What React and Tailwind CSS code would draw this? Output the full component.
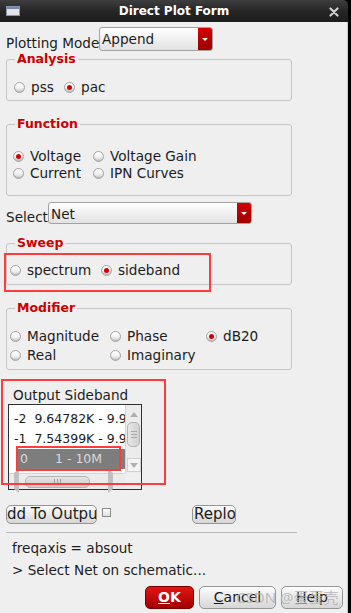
import React from "react";

function Radio({ checked }) {
  return (
    <span className="w-[11px] h-[11px] rounded-full border border-[#a4a4a4] bg-gradient-to-b from-[#ffffff] via-[#f4f4f4] to-[#cfcfcf] flex items-center justify-center shrink-0 shadow-[inset_0_-1px_1px_rgba(0,0,0,0.12)]">
      {checked && <span className="w-[5px] h-[5px] rounded-full bg-[#d40000]" />}
    </span>
  );
}

function RItem({ label, checked, w }) {
  return (
    <div className={"flex items-center gap-[6px] " + (w || "")}>
      <Radio checked={checked} />
      <span className="whitespace-nowrap">{label}</span>
    </div>
  );
}

function Group({ title, className, children }) {
  return (
    <div className={"relative ml-[6px] w-[286px] border border-[#c6c6c6] rounded-[3px] " + className}>
      <span className="absolute left-[8px] top-[-9px] px-[2px] bg-[#efefef] text-[#cc0000] font-bold text-[12.5px] leading-[16px]">
        {title}
      </span>
      {children}
    </div>
  );
}

function Dropdown({ label, className }) {
  return (
    <div className={"relative z-10 flex border border-[#a2a2a2] rounded-[3px] bg-gradient-to-b from-[#ffffff] to-[#e2e2e2] overflow-hidden " + className}>
      <span className="flex-1 pl-[2px] pt-[3px] leading-[16px]">{label}</span>
      <span className="w-[14px] bg-gradient-to-b from-[#d60000] to-[#9c0000] flex items-center justify-center">
        <span className="w-0 h-0 border-l-[3px] border-r-[3px] border-t-[3px] border-l-transparent border-r-transparent border-t-white" />
      </span>
    </div>
  );
}

function Arrow({ dir }) {
  const cls = {
    up: "border-l-[4px] border-r-[4px] border-b-[5px] border-l-transparent border-r-transparent border-b-[#b0b0b0]",
    down: "border-l-[4px] border-r-[4px] border-t-[5px] border-l-transparent border-r-transparent border-t-[#b0b0b0]",
    left: "border-t-[4px] border-b-[4px] border-r-[5px] border-t-transparent border-b-transparent border-r-[#c0c0c0]",
    right: "border-t-[4px] border-b-[4px] border-l-[5px] border-t-transparent border-b-transparent border-l-[#c0c0c0]",
  }[dir];
  return <span className={"w-0 h-0 " + cls} />;
}

function Btn({ children, className }) {
  return (
    <div className={"flex items-center overflow-hidden whitespace-nowrap border border-[#959595] rounded-[5px] bg-gradient-to-b from-[#fdfdfd] to-[#d6d6d6] " + className}>
      {children}
    </div>
  );
}

export default function App() {
  return (
    <div className="relative w-[351px] h-[613px] bg-black overflow-hidden font-['DejaVu_Sans',sans-serif] text-[13.6px] text-[#1c1c1c]">
      <div className="w-[348px] h-[613px] flex flex-col">
        {/* title bar */}
        <div className="h-[22px] rounded-tr-[5px] bg-gradient-to-b from-[#3e3e3e] via-[#262626] to-[#1c1c1c] flex items-center relative">
          <div className="ml-[6px] w-[14px] h-[10px] bg-[#e4e4e8] border border-[#8a96a8] flex flex-col">
            <div className="h-[2px] bg-[#6f86b0]" />
          </div>
          <div className="absolute left-0 right-0 text-center text-white font-bold text-[12px] leading-[22px]">
            Direct Plot Form
          </div>
          <svg className="absolute left-[329px] top-[7px]" width="10" height="10" viewBox="0 0 10 10">
            <path d="M1.5 1.5 L8.5 8.5 M8.5 1.5 L1.5 8.5" stroke="#cfcfcf" strokeWidth="2.2" strokeLinecap="round" />
          </svg>
        </div>

        {/* body */}
        <div className="flex-1 bg-[#efefef] border-r border-[#c4c4c4] flex flex-col">
          {/* plotting mode */}
          <div className="mt-[5px] ml-[6px] flex items-start">
            <div className="w-[93px] pt-[8px] leading-[16px] whitespace-nowrap">Plotting Mode</div>
            <Dropdown label="Append" className="w-[114px] h-[24px]" />
          </div>

          <Group title="Analysis" className="mt-[8px] h-[42px] pt-[19px]">
            <div className="flex h-[16px] pl-[7px]">
              <RItem label="pss" w="w-[50px]" />
              <RItem label="pac" checked />
            </div>
          </Group>

          <Group title="Function" className="mt-[23px] h-[72px] pt-[23px]">
            <div className="flex h-[17px] pl-[6px]">
              <RItem label="Voltage" checked w="w-[80px]" />
              <RItem label="Voltage Gain" />
            </div>
            <div className="flex h-[17px] pl-[6px]">
              <RItem label="Current" w="w-[80px]" />
              <RItem label="IPN Curves" />
            </div>
          </Group>

          {/* select */}
          <div className="mt-[6px] ml-[6px] flex items-start">
            <div className="w-[42px] pt-[7px] leading-[16px] whitespace-nowrap">Select</div>
            <Dropdown label="Net" className="w-[204px] h-[22px]" />
          </div>

          <Group title="Sweep" className="mt-[18px] h-[42px] pt-[18px]">
            <div className="flex h-[16px] pl-[3px]">
              <RItem label="spectrum" w="w-[91px]" />
              <RItem label="sideband" checked />
            </div>
          </Group>

          <Group title="Modifier" className="mt-[23px] h-[62px] pt-[18px]">
            <div className="flex h-[19px] pl-[3px]">
              <RItem label="Magnitude" w="w-[100px]" />
              <RItem label="Phase" w="w-[96px]" />
              <RItem label="dB20" checked />
            </div>
            <div className="flex h-[19px] pl-[3px]">
              <RItem label="Real" w="w-[100px]" />
              <RItem label="Imaginary" />
            </div>
          </Group>

          {/* output sideband */}
          <div className="mt-[17px] ml-[13px] leading-[16px]">Output Sideband</div>
          <div className="mt-[1px] ml-[8px] w-[134px] h-[86px] border border-[#303030] bg-white flex flex-col">
            <div className="flex h-[68px]">
              <div className="w-[116px] pt-[4px] overflow-hidden whitespace-pre text-[12.5px]">
                <div className="h-[20px] flex items-center pl-[5px]">
                  <span className="shrink-0">-2  9.64782K - 9.99G</span>
                </div>
                <div className="h-[20px] flex items-center pl-[5px]">
                  <span className="shrink-0">-1  7.54399K - 9.99G</span>
                </div>
                <div className="h-[20px] flex items-center bg-[#7d7d7d] text-[#dadada] ml-[7px]">
                  <span className="ml-[4px] w-[35px] shrink-0">0</span>
                  <span className="shrink-0">1 - 10M</span>
                </div>
              </div>
              <div className="w-[16px] bg-[#ececec] border-l border-[#d4d4d4] flex flex-col items-center">
                <div className="h-[14px] mt-[2px] flex items-center justify-center"><Arrow dir="up" /></div>
                <div className="mt-[1px] w-[13px] h-[25px] rounded-[5px] border border-[#b4b4b4] bg-gradient-to-r from-[#e8e8e8] to-[#d0d0d0] flex flex-col items-center justify-center gap-[2px]">
                  <span className="w-[6px] h-px bg-[#a8a8a8]" />
                  <span className="w-[6px] h-px bg-[#a8a8a8]" />
                  <span className="w-[6px] h-px bg-[#a8a8a8]" />
                </div>
                <div className="flex-1" />
                <div className="h-[14px] mb-[1px] w-[14px] flex items-center justify-center border border-[#d0d0d0] bg-[#f4f4f4]"><Arrow dir="down" /></div>
              </div>
            </div>
            <div className="flex h-[16px]">
              <div className="w-[116px] bg-[#ececec] border-t border-[#d4d4d4] flex items-center">
                <div className="ml-[5px]"><Arrow dir="left" /></div>
                <div className="ml-[6px] w-[65px] h-[12px] rounded-[5px] border border-[#b4b4b4] bg-gradient-to-b from-[#e4e4e4] to-[#cbcbcb] flex items-center justify-center gap-[2px]">
                  <span className="w-px h-[5px] bg-[#a0a0a0]" />
                  <span className="w-px h-[5px] bg-[#a0a0a0]" />
                  <span className="w-px h-[5px] bg-[#a0a0a0]" />
                </div>
                <div className="ml-[18px]"><Arrow dir="right" /></div>
              </div>
              <div className="w-[16px] bg-[#efefef]" />
            </div>
          </div>

          {/* buttons row */}
          <div className="mt-[15px] ml-[6px] flex items-start text-[15px]">
            <Btn className="w-[91px] h-[19px] justify-start">
              <span className="shrink-0 ml-[-10px]">Add To Output</span>
            </Btn>
            <div className="ml-[5px] mt-[3px] w-[9px] h-[9px] border border-[#8a8a8a] bg-gradient-to-b from-white to-[#dedede]" />
            <Btn className="ml-[81px] w-[44px] h-[19px] justify-start pl-[1px]">
              <span className="shrink-0">Replot</span>
            </Btn>
          </div>

          <div className="mt-[8px] ml-[6px] w-[291px] h-px bg-[#b8b8b8]" />

          <div className="mt-[7px] ml-[12px] leading-[16px]">freqaxis = absout</div>
          <div className="mt-[6px] ml-[12px] leading-[16px]">&gt; Select Net on schematic...</div>

          <div className="mt-[8px] ml-[145px] flex gap-[5px]">
            <div className="w-[49px] h-[23px] rounded-[5px] border border-[#7a0000] bg-gradient-to-b from-[#e41414] to-[#a20000] flex items-center justify-center text-white font-bold text-[14px]">
              <span><span className="underline">O</span>K</span>
            </div>
            <Btn className="w-[77px] h-[23px] text-[14px] justify-center">
              <span><span className="underline">C</span>ancel</span>
            </Btn>
            <Btn className="w-[62px] h-[23px] text-[14px] justify-center">
              <span><span className="underline">H</span>elp</span>
            </Btn>
          </div>
        </div>
      </div>

      {/* annotation rectangles */}
      <div className="absolute left-[4px] top-[253px] w-[207px] h-[39px] border-2 border-[#ff3c3c]" />
      <div className="absolute left-[1px] top-[379px] w-[165px] h-[106px] border-2 border-[#ff3c3c]" />
      <div className="absolute left-[16px] top-[446px] w-[105px] h-[25px] border-2 border-[#ff3c3c]" />

      {/* watermark */}
      <div className="absolute left-[236px] top-[588px] text-[15px] leading-[18px] text-[#b0b0b0]/80 font-['Noto_Sans','Noto_Sans_CJK_SC',sans-serif] whitespace-nowrap">
        CSDN @蛋蛋壳
      </div>
    </div>
  );
}
